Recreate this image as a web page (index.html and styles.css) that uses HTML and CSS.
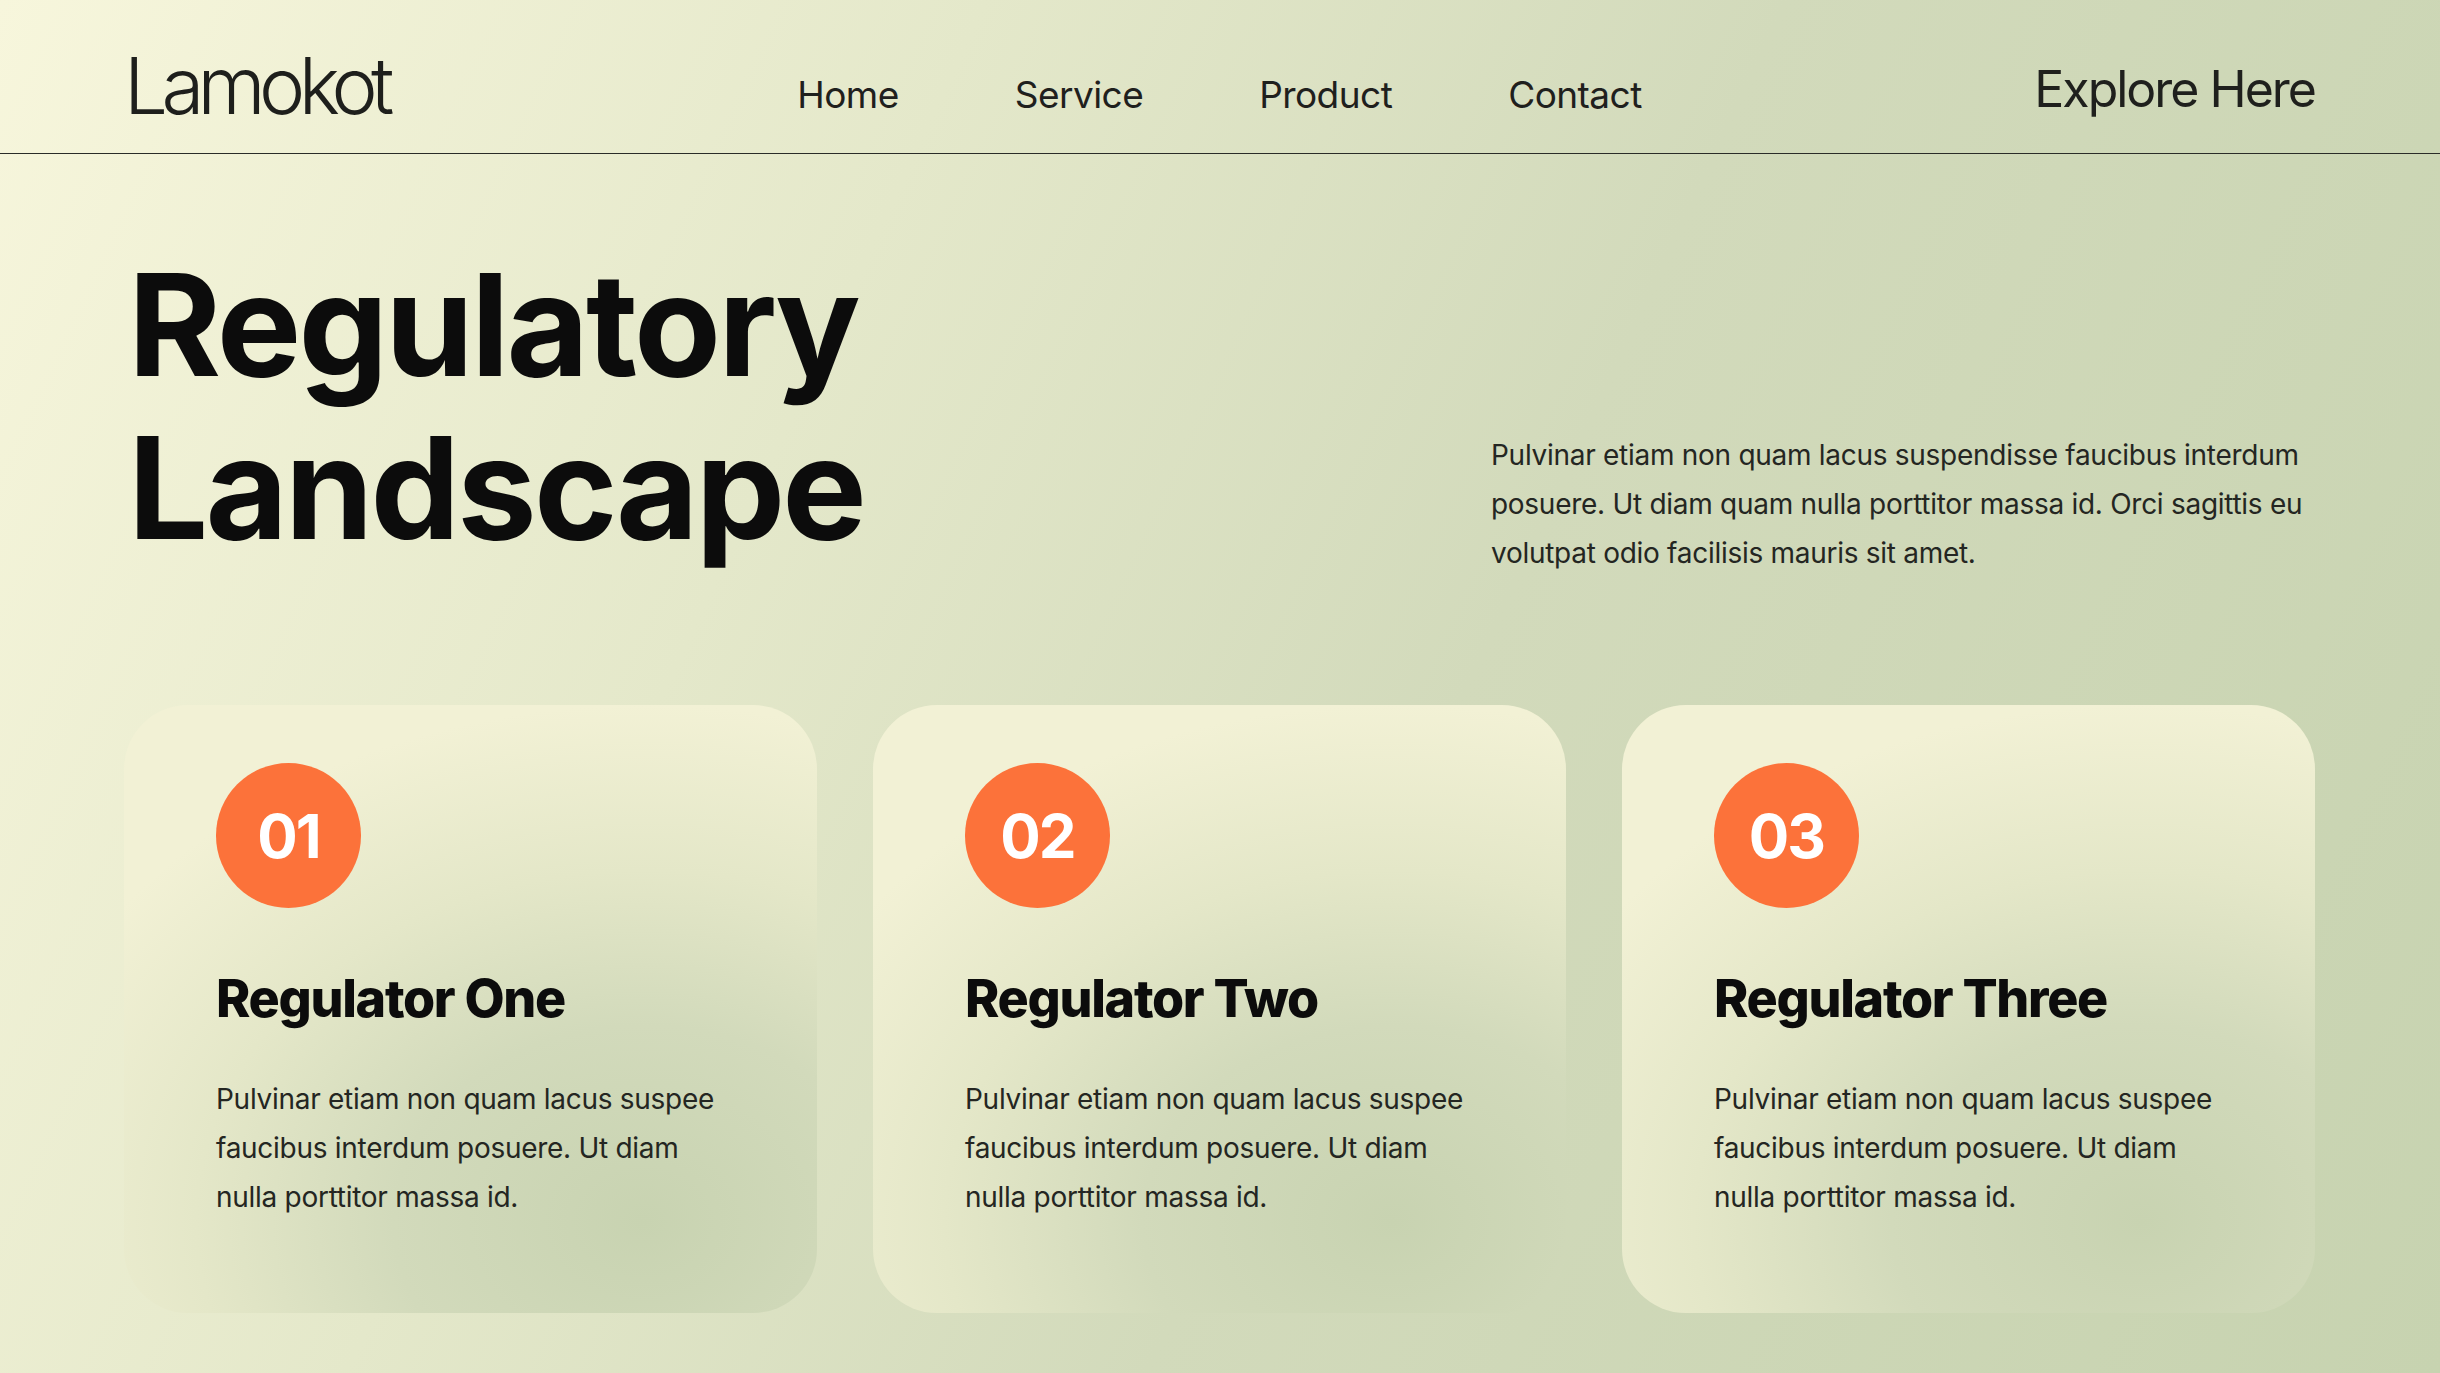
FILE: index.html
```html
<!DOCTYPE html>
<html lang="en">
<head>
<meta charset="UTF-8" />
<meta name="viewport" content="width=device-width, initial-scale=1" />
<title>Lamokot - Regulatory Landscape</title>
<link rel="stylesheet" href="styles.css">
</head>
<body>
  <header class="topbar">
    <div class="topbar-inner">
      <a class="logo" href="#">Lamokot</a>
      <nav>
        <ul class="menu">
          <li><a href="#">Home</a></li>
          <li><a href="#">Service</a></li>
          <li><a href="#">Product</a></li>
          <li><a href="#">Contact</a></li>
        </ul>
      </nav>
      <a class="explore" href="#">Explore Here</a>
    </div>
  </header>

  <main class="page">
    <section class="hero">
      <h1>Regulatory<br>Landscape</h1>
      <p class="hero-text">Pulvinar etiam non quam lacus suspendisse faucibus interdum posuere. Ut diam quam nulla porttitor massa id. Orci sagittis eu volutpat odio facilisis mauris sit amet.</p>
    </section>

    <section class="cards">
      <article class="card">
        <div class="badge">01</div>
        <h2>Regulator One</h2>
        <p>Pulvinar etiam non quam lacus suspee faucibus interdum posuere. Ut diam nulla porttitor massa id.</p>
      </article>
      <article class="card">
        <div class="badge">02</div>
        <h2>Regulator Two</h2>
        <p>Pulvinar etiam non quam lacus suspee faucibus interdum posuere. Ut diam nulla porttitor massa id.</p>
      </article>
      <article class="card">
        <div class="badge">03</div>
        <h2>Regulator Three</h2>
        <p>Pulvinar etiam non quam lacus suspee faucibus interdum posuere. Ut diam nulla porttitor massa id.</p>
      </article>
    </section>
  </main>
</body>
</html>
```

FILE: styles.css
```css
:root {
  --ink: #0c0c0c;
  --text: #242622;
  --line: #2a2c28;
  --orange: #fc723a;
  --cream: #f2f1d5;
  --sage: #c8d3b1;
}
* {
  box-sizing: border-box;
}
html, body {
  margin: 0;
  min-height: 100%;
}
body {
  font-family: Inter, 'Noto Sans', sans-serif;
  color: var(--text);
  background: linear-gradient(115deg, #f7f6dc 0%, #e4e8ca 32%, #d2dabb 58%, #c7d3b0 100%);
  min-height: 100vh;
}
a {
  color: inherit;
  text-decoration: none;
}

/* top bar */
.topbar {
  border-bottom: 1.5px solid var(--line);
}
.topbar-inner {
  height: 153px;
  padding: 0 125px 0 124px;
  display: grid;
  grid-template-columns: 1fr auto 1fr;
  align-items: start;
}
.logo {
  margin-top: 38px;
  font-size: 78px;
  font-weight: 300;
  letter-spacing: -0.085em;
  color: #1e1f1c;
}
.menu {
  list-style: none;
  margin: 72px 0 0;
  padding: 0;
  display: flex;
  gap: 116px;
  font-size: 37px;
  letter-spacing: -0.015em;
  color: #1f201d;
}
.explore {
  justify-self: end;
  margin-top: 59px;
  font-size: 50px;
  font-weight: 400;
  letter-spacing: -0.04em;
  color: #1f201d;
}

/* hero */
.page {
  padding: 0 125px 0 124px;
}
.hero {
  display: flex;
  justify-content: space-between;
  align-items: flex-start;
  padding-top: 89px;
}
h1 {
  margin: 0 0 0 4px;
  font-size: 142px;
  line-height: 163px;
  font-weight: 700;
  letter-spacing: -0.02em;
  color: var(--ink);
}
.hero-text {
  width: 824px;
  margin: 188px 0 0;
  font-size: 28px;
  line-height: 49px;
  letter-spacing: -0.01em;
}

/* cards */
.cards {
  display: grid;
  grid-template-columns: repeat(3, 1fr);
  gap: 56px;
  margin-top: 127px;
}
.card {
  border-radius: 64px;
  padding: 58px 90px 91px 92px;
  background: radial-gradient(ellipse 95% 85% at 75% 85%, #c8d3b1 0%, #d2dabb 38%, #e4e7c8 68%, var(--cream) 100%);
}
.badge {
  width: 145px;
  height: 145px;
  border-radius: 50%;
  background: var(--orange);
  color: #fff;
  font-size: 60px;
  font-weight: 700;
  letter-spacing: -0.03em;
  display: flex;
  align-items: center;
  justify-content: center;
}
.card h2 {
  margin: 60px 0 0;
  font-size: 52px;
  line-height: 62px;
  font-weight: 800;
  letter-spacing: -0.025em;
  color: var(--ink);
}
.card p {
  margin: 45px 0 0;
  font-size: 28px;
  line-height: 49px;
  letter-spacing: -0.01em;
}
```
